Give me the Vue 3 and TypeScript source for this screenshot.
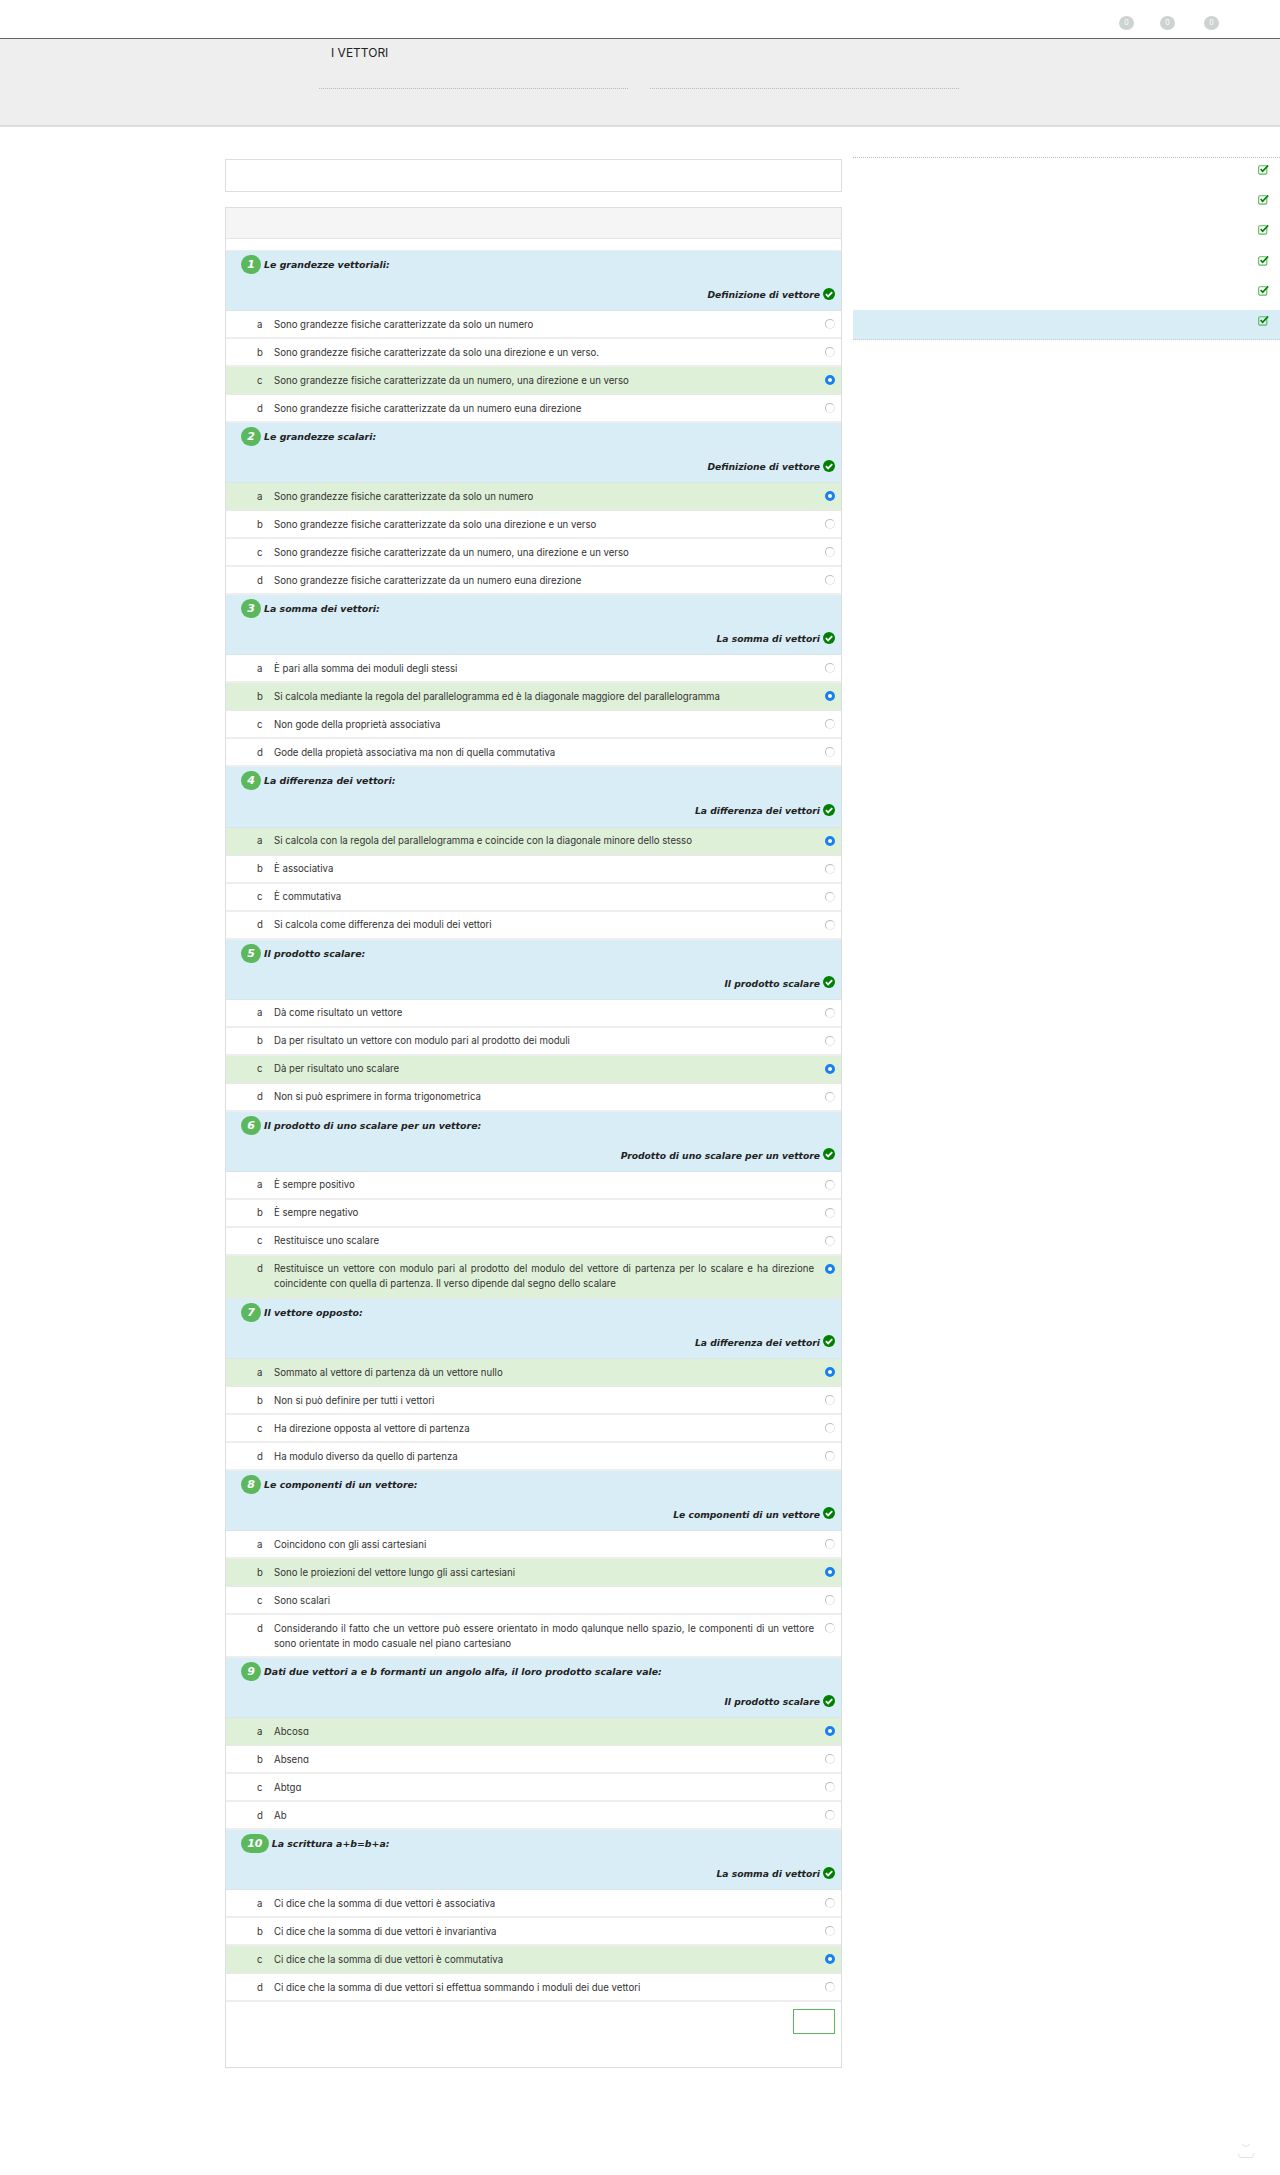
<script setup lang="ts">
interface Option { letter: string; text: string; correct?: boolean; wrap?: boolean }
interface Question { n: number; title: string; topic: string; options: Option[] }

function opts(texts: string[], correct: number, wrap = -1): Option[] {
  return texts.map((text, i) => ({
    letter: 'abcd'[i],
    text,
    correct: i === correct,
    wrap: i === wrap,
  }))
}

const questions: Question[] = [
  { n: 1, title: 'Le grandezze vettoriali:', topic: 'Definizione di vettore', options: opts([
    'Sono grandezze fisiche caratterizzate da solo un numero',
    'Sono grandezze fisiche caratterizzate da solo una direzione e un verso.',
    'Sono grandezze fisiche caratterizzate da un numero, una direzione e un verso',
    'Sono grandezze fisiche caratterizzate da un numero euna direzione',
  ], 2) },
  { n: 2, title: 'Le grandezze scalari:', topic: 'Definizione di vettore', options: opts([
    'Sono grandezze fisiche caratterizzate da solo un numero',
    'Sono grandezze fisiche caratterizzate da solo una direzione e un verso',
    'Sono grandezze fisiche caratterizzate da un numero, una direzione e un verso',
    'Sono grandezze fisiche caratterizzate da un numero euna direzione',
  ], 0) },
  { n: 3, title: 'La somma dei vettori:', topic: 'La somma di vettori', options: opts([
    'È pari alla somma dei moduli degli stessi',
    'Si calcola mediante la regola del parallelogramma ed è la diagonale maggiore del parallelogramma',
    'Non gode della proprietà associativa',
    'Gode della propietà associativa ma non di quella commutativa',
  ], 1) },
  { n: 4, title: 'La differenza dei vettori:', topic: 'La differenza dei vettori', options: opts([
    'Si calcola con la regola del parallelogramma e coincide con la diagonale minore dello stesso',
    'È associativa',
    'È commutativa',
    'Si calcola come differenza dei moduli dei vettori',
  ], 0) },
  { n: 5, title: 'Il prodotto scalare:', topic: 'Il prodotto scalare', options: opts([
    'Dà come risultato un vettore',
    'Da per risultato un vettore con modulo pari al prodotto dei moduli',
    'Dà per risultato uno scalare',
    'Non si può esprimere in forma trigonometrica',
  ], 2) },
  { n: 6, title: 'Il prodotto di uno scalare per un vettore:', topic: 'Prodotto di uno scalare per un vettore', options: opts([
    'È sempre positivo',
    'È sempre negativo',
    'Restituisce uno scalare',
    'Restituisce un vettore con modulo pari al prodotto del modulo del vettore di partenza per lo scalare e ha direzione coincidente con quella di partenza. Il verso dipende dal segno dello scalare',
  ], 3, 3) },
  { n: 7, title: 'Il vettore opposto:', topic: 'La differenza dei vettori', options: opts([
    'Sommato al vettore di partenza dà un vettore nullo',
    'Non si può definire per tutti i vettori',
    'Ha direzione opposta al vettore di partenza',
    'Ha modulo diverso da quello di partenza',
  ], 0) },
  { n: 8, title: 'Le componenti di un vettore:', topic: 'Le componenti di un vettore', options: opts([
    'Coincidono con gli assi cartesiani',
    'Sono le proiezioni del vettore lungo gli assi cartesiani',
    'Sono scalari',
    'Considerando il fatto che un vettore può essere orientato in modo qalunque nello spazio, le componenti di un vettore sono orientate in modo casuale nel piano cartesiano',
  ], 1, 3) },
  { n: 9, title: 'Dati due vettori a e b formanti un angolo alfa, il loro prodotto scalare vale:', topic: 'Il prodotto scalare', options: opts([
    'Abcosɑ',
    'Absenɑ',
    'Abtgɑ',
    'Ab',
  ], 0) },
  { n: 10, title: 'La scrittura a+b=b+a:', topic: 'La somma di vettori', options: opts([
    'Ci dice che la somma di due vettori è associativa',
    'Ci dice che la somma di due vettori è invariantiva',
    'Ci dice che la somma di due vettori è commutativa',
    'Ci dice che la somma di due vettori si effettua sommando i moduli dei due vettori',
  ], 2) },
]

const badges = [
  { id: 'a', gap: 0 },
  { id: 'b', gap: 26 },
  { id: 'c', gap: 29 },
]
const lessons = [0, 1, 2, 3, 4, 5]
</script>

<template>
  <div class="page">
    <header class="topbar">
      <span v-for="b in badges" :key="b.id" class="count" :style="{ marginLeft: b.gap + 'px' }">0</span>
    </header>

    <section class="band">
      <h1 class="band-title">I VETTORI</h1>
      <div class="band-rules">
        <span class="rule"></span>
        <span class="rule"></span>
      </div>
    </section>

    <main class="content">
      <div class="left">
        <div class="panel intro"></div>
        <div class="panel quiz">
          <div class="quiz-head"></div>
          <div class="quiz-gap"></div>
          <article v-for="q in questions" :key="q.n" class="question">
            <div class="q-head">
              <div class="q-title">
                <span class="q-num">{{ q.n }}</span>
                <span class="q-text">{{ q.title }}</span>
              </div>
              <div class="q-topic">
                <span>{{ q.topic }}</span>
                <svg class="ok" viewBox="0 0 12 12" aria-hidden="true">
                  <circle cx="6" cy="6" r="6" fill="#008000" />
                  <path d="M2.9 6.1 5.1 8.3 9.2 4.1" fill="none" stroke="#fff" stroke-width="1.9" />
                </svg>
              </div>
            </div>
            <div
              v-for="o in q.options"
              :key="o.letter"
              class="option"
              :class="{ correct: o.correct, wrap: o.wrap }"
            >
              <span class="letter">{{ o.letter }}</span>
              <span class="text">{{ o.text }}</span>
              <span class="radio" :class="{ on: o.correct }"></span>
            </div>
          </article>
          <div class="quiz-foot">
            <span class="submit"></span>
          </div>
        </div>
      </div>

      <aside class="lessons">
        <div v-for="l in lessons" :key="l" class="lesson" :class="{ active: l === 5 }">
          <svg class="tick" viewBox="0 0 10 10" aria-hidden="true">
            <rect x="0.6" y="1.6" width="7.4" height="7.6" rx="1.2" fill="none" stroke="#5cb85c" stroke-width="1" />
            <path d="M2.4 4.6 4.2 6.6 9.2 1.2" fill="none" stroke="#008000" stroke-width="1.5" />
          </svg>
        </div>
      </aside>
    </main>

    <svg class="helper" viewBox="0 0 16 16" aria-hidden="true">
      <path d="M4.6 1a3.6 3.6 0 0 0 6.8 0" fill="none" stroke="#dde3e3" stroke-width="1" />
      <path d="M0.5 10.5c0 3 1 4 2.5 4h10c1.5 0 2.5-1 2.5-4" fill="none" stroke="#dde3e3" stroke-width="1" />
    </svg>
  </div>
</template>

<style>
body { background: #fff; }
</style>

<style scoped>
.page {
  position: relative;
  height: 2175px;
  overflow: hidden;
  background: #fff;
  color: #333;
  font-family: "Inter", "Noto Sans", sans-serif;
}
.topbar {
  box-sizing: border-box;
  height: 39px;
  padding: 16px 0 0 1119px;
  display: flex;
  align-items: flex-start;
  border-bottom: 1px solid #666;
}
.count {
  width: 15px;
  height: 14px;
  border-radius: 50%;
  background: #ccd3d1;
  color: #fff;
  font-size: 7px;
  line-height: 14px;
  text-align: center;
}
.band {
  box-sizing: border-box;
  height: 88px;
  padding: 6px 0 0 319px;
  background: #eee;
  border-bottom: 2px solid #ddd;
}
.band-title {
  margin: 0 0 0 12px;
  font-size: 12px;
  line-height: 16px;
  font-weight: 400;
  color: #222;
}
.band-rules {
  display: flex;
  gap: 22px;
  margin-top: 27px;
}
.rule {
  width: 309px;
  border-top: 1px dotted #bbb;
}
.content {
  display: flex;
  align-items: flex-start;
}
.left {
  width: 617px;
  margin: 32px 0 0 225px;
}
.panel {
  box-sizing: border-box;
  border: 1px solid #ddd;
}
.intro {
  height: 33px;
  margin-bottom: 15px;
}
.quiz-head {
  height: 30px;
  background: #f5f5f5;
  border-bottom: 1px solid #e4e4e4;
}
.quiz-gap {
  height: 11px;
  border-bottom: 1px solid #eee;
}
.q-head {
  box-sizing: border-box;
  height: 60.15px;
  padding: 4px 6px 0 15px;
  background: #d9edf7;
  border-bottom: 1px solid #d8e4e8;
  font-family: "DejaVu Sans", sans-serif;
  font-size: 9.4px;
  font-weight: 700;
  font-style: italic;
  color: #222;
}
.q-title {
  display: flex;
  align-items: center;
  height: 19px;
}
.q-num {
  flex: none;
  padding: 0 6.2px;
  height: 19px;
  border-radius: 10px;
  background: #5cb85c;
  color: #fff;
  font-size: 11px;
  line-height: 19px;
  text-align: center;
}
.q-text {
  margin-left: 3px;
}
.q-topic {
  display: flex;
  justify-content: flex-end;
  align-items: center;
  gap: 3px;
  height: 13px;
  margin-top: 14px;
  font-size: 9.2px;
}
.ok {
  width: 12px;
  height: 12px;
  flex: none;
  margin-top: -2px;
}
.option {
  box-sizing: border-box;
  display: flex;
  align-items: flex-start;
  min-height: 28px;
  padding: 5.6px 6px 5.4px 0;
  border-bottom: 2px solid #eee;
  font-size: 9.65px;
  line-height: 15px;
  background: #fff;
}
.option.correct {
  background: #dff0d8;
  border-bottom-color: #e4ebe1;
}
.letter {
  flex: none;
  width: 48px;
  padding-left: 31px;
  box-sizing: border-box;
}
.text {
  flex: 1;
  margin-right: 11px;
}
.option.wrap .text {
  text-align: justify;
}
.radio {
  flex: none;
  box-sizing: border-box;
  width: 10px;
  height: 10px;
  margin-top: 2.4px;
  border-radius: 50%;
  border: 1px solid #bdbdbd;
  border-right-color: #e6e6e6;
  border-bottom-color: #e6e6e6;
}
.radio.on {
  border: 3px solid #1a7ff0;
  background: #fff;
}
.quiz-foot {
  display: flex;
  justify-content: flex-end;
  height: 65px;
  padding: 7px 6px 0 0;
  box-sizing: border-box;
}
.submit {
  box-sizing: border-box;
  width: 42px;
  height: 25px;
  border: 1px solid #5cb85c;
}
.lessons {
  width: 427px;
  margin: 30px 0 0 11px;
  border-top: 1px dotted #bbb;
}
.lesson {
  box-sizing: border-box;
  height: 30.4px;
  padding: 5.5px 11px 0 0;
  display: flex;
  justify-content: flex-end;
  align-items: flex-start;
}
.lesson.active {
  background: #d9edf7;
  border-bottom: 1px dotted #ccc;
}
.tick {
  width: 11px;
  height: 11px;
}
.helper {
  position: absolute;
  left: 1238px;
  top: 2143px;
  width: 16px;
  height: 16px;
}
</style>
